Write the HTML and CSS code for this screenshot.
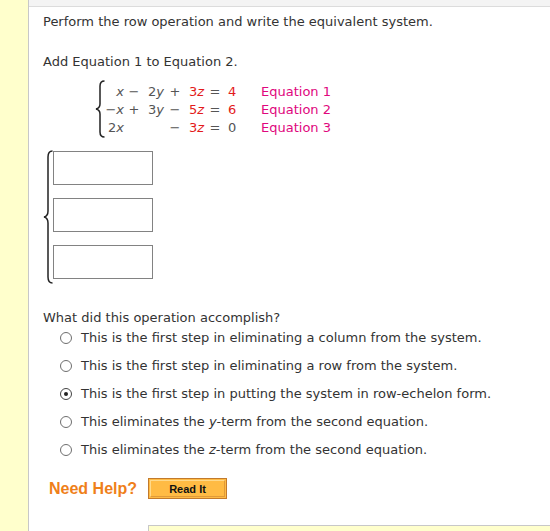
FILE: index.html
```html
<!DOCTYPE html>
<html>
<head>
<meta charset="utf-8">
<link rel="stylesheet" href="styles.css">
</head>
<body>
<div class="page">
  <div class="side"></div>
  <div class="main">
    <div class="topbar"></div>
    <div class="content">
      <p class="line first">Perform the row operation and write the equivalent system.</p>
      <p class="line instr">Add Equation 1 to Equation 2.</p>

      <div class="system">
        <svg class="brace" width="10" height="58" viewBox="0 0 10 58"><path d="M9.5,1 C6.5,1 5,2.5 5,6 L5,24 C5,27 3.5,28.5 1,29 C3.5,29.5 5,31 5,34 L5,52 C5,55.5 6.5,57 9.5,57" fill="none" stroke="#222" stroke-width="1.5"/></svg>
        <div class="eqgrid">
          <span class="c1"><i>x</i></span><span class="c2">−</span><span class="c3">2<i>y</i></span><span class="c4">+</span><span class="c5 red">3<i>z</i></span><span class="c6">=</span><span class="c7 red">4</span>
          <span class="c1">−<i>x</i></span><span class="c2">+</span><span class="c3">3<i>y</i></span><span class="c4">−</span><span class="c5 red">5<i>z</i></span><span class="c6">=</span><span class="c7 red">6</span>
          <span class="c1">2<i>x</i></span><span class="c2"></span><span class="c3"></span><span class="c4">−</span><span class="c5 red">3<i>z</i></span><span class="c6">=</span><span class="c7">0</span>
        </div>
        <div class="labels">
          <span>Equation 1</span>
          <span>Equation 2</span>
          <span>Equation 3</span>
        </div>
      </div>

      <div class="answer">
        <svg class="brace" width="10" height="134" viewBox="0 0 10 134"><path d="M9.5,1 C6.5,1 5,2.5 5,7 L5,61 C5,64.5 3.5,66.5 1,67 C3.5,67.5 5,69.5 5,73 L5,127 C5,131.5 6.5,133 9.5,133" fill="none" stroke="#222" stroke-width="1.5"/></svg>
        <div class="boxes">
          <div class="box"></div>
          <div class="box"></div>
          <div class="box"></div>
        </div>
      </div>

      <p class="line question">What did this operation accomplish?</p>
      <ul class="options">
        <li><span class="radio"></span><span>This is the first step in eliminating a column from the system.</span></li>
        <li><span class="radio"></span><span>This is the first step in eliminating a row from the system.</span></li>
        <li><span class="radio checked"></span><span>This is the first step in putting the system in row-echelon form.</span></li>
        <li><span class="radio"></span><span>This eliminates the <i>y</i>-term from the second equation.</span></li>
        <li><span class="radio"></span><span>This eliminates the <i>z</i>-term from the second equation.</span></li>
      </ul>

      <div class="help">
        <span class="needhelp">Need Help?</span>
        <span class="readit"><span class="readit-inner">Read It</span></span>
      </div>

      <div class="next"></div>
    </div>
  </div>
</div>
</body>
</html>
```

FILE: styles.css
```css
html, body {
  margin: 0;
  padding: 0;
  background: #fff;
}
body {
  font-family: "DejaVu Sans", Verdana, sans-serif;
  font-size: 13px;
  color: #333;
}
.page {
  display: flex;
  width: 550px;
  height: 531px;
  overflow: hidden;
}
.side {
  width: 28px;
  flex: none;
  background: #ffffcc;
  border-right: 1px solid #c8c8c8;
}
.main {
  flex: 1;
  display: flex;
  flex-direction: column;
}
.main > * { flex: none; }
.topbar {
  height: 6px;
  background: #f4f4f4;
  border-bottom: 1px solid #dcdcdc;
}
.content {
  padding-left: 14px;
  display: flex;
  flex-direction: column;
}
.content > * { flex: none; }
.line {
  margin: 0;
  line-height: 16px;
}
.first { margin-top: 7px; }
.instr { margin-top: 24px; }

.system {
  display: flex;
  margin-top: 10px;
  margin-left: 52px;
  height: 58px;
}
.brace { display: block; flex: none; }
.eqgrid {
  display: grid;
  grid-template-columns: 19px 20px 20px 22px 18px 20px 28px;
  grid-auto-rows: 18px;
  line-height: 18px;
  padding-top: 3px;
  color: #555;
}
.eqgrid span { white-space: nowrap; }
.c1, .c3, .c5 { text-align: right; }
.c2, .c4 { text-align: center; }
.c6 { text-align: center; padding-left: 2px; }
.c7 { padding-left: 4px; }
.red { color: #e31b1b; }
.labels {
  display: flex;
  flex-direction: column;
  padding-top: 3px;
  margin-left: 9px;
  line-height: 18px;
  color: #e0077d;
}

.answer {
  display: flex;
  margin-top: 12px;
  height: 134px;
}
.boxes {
  display: flex;
  flex-direction: column;
  gap: 13px;
  padding-top: 1px;
}
.box {
  width: 100px;
  height: 34px;
  box-sizing: border-box;
  border: 1px solid #828282;
  background: #fff;
}

.question { margin-top: 26px; }
.options {
  list-style: none;
  margin: 4px 0 0 0;
  padding: 0 0 0 17px;
  display: flex;
  flex-direction: column;
  gap: 12px;
}
.options li {
  display: flex;
  align-items: center;
  line-height: 16px;
}
.radio {
  width: 12px;
  height: 12px;
  box-sizing: border-box;
  border: 1px solid #6e6e6e;
  border-radius: 50%;
  margin-right: 9px;
  flex: none;
  display: flex;
  align-items: center;
  justify-content: center;
}
.radio.checked { border-color: #444; }
.radio.checked::after {
  content: "";
  width: 4px;
  height: 4px;
  border-radius: 50%;
  background: #222;
}

.help {
  display: flex;
  align-items: center;
  margin-top: 20px;
  margin-left: 6px;
  height: 21px;
}
.needhelp {
  font-family: "Liberation Sans", Arial, sans-serif;
  font-weight: bold;
  font-size: 16px;
  color: #ef7f1a;
  margin-right: 11px;
}
.readit {
  display: block;
  width: 79px;
  height: 21px;
  box-sizing: border-box;
  border: 1px solid #c27a2c;
  background: #ffbb44;
  padding: 1px;
}
.readit-inner {
  display: flex;
  align-items: center;
  justify-content: center;
  height: 100%;
  box-sizing: border-box;
  border: 1px solid #ffd98a;
  border-right-color: #e09a3a;
  border-bottom-color: #e09a3a;
  font-family: "Liberation Sans", Arial, sans-serif;
  font-weight: bold;
  font-size: 11px;
  color: #111;
}

.next {
  margin-top: 26px;
  margin-left: 105px;
  height: 20px;
  background: #ffffcc;
  border-top: 1px solid #c8c8c8;
  border-left: 1px solid #c8c8c8;
}
```
